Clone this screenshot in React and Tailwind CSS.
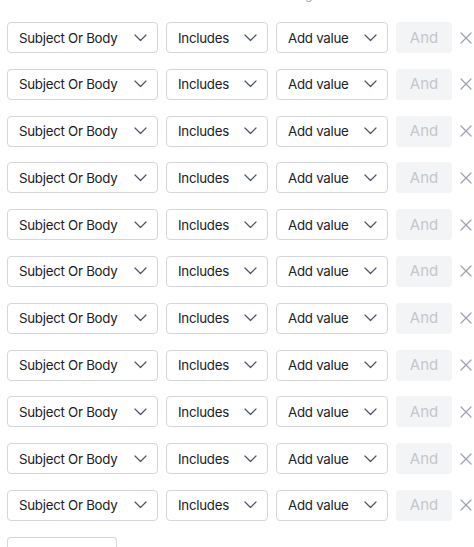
import React from 'react';

const Chevron = () => (
    <svg width="13" height="8" viewBox="0 0 13 8" fill="none" className="shrink-0">
        <path d="M1 1l5.5 5.5L12 1" stroke="#4b5563" strokeWidth="1.2" strokeLinecap="round" strokeLinejoin="round" />
    </svg>
);

const Close = () => (
    <svg width="12" height="12" viewBox="0 0 12 12" fill="none">
        <path d="M1 1l10 10M11 1L1 11" stroke="#9ca3af" strokeWidth="1.3" strokeLinecap="round" />
    </svg>
);

const Select = ({ label, width }) => (
    <div className={`${width} h-[31px] shrink-0 flex items-center justify-between pl-[11px] pr-[10px] border border-[#d4d6da] rounded-[4px] bg-white`}>
        <span className="text-[13.3px] tracking-[-0.02em] text-[#202124] leading-[18px]">{label}</span>
        <Chevron />
    </div>
);

const App = () => {
    const rows = Array.from({ length: 11 });

    return (
        <div className="w-[474px] h-[547px] overflow-hidden bg-white" style={{ fontFamily: 'Inter, "Noto Sans", sans-serif' }}>
            <div className="h-[22px] relative">
                <p className="absolute left-[105px] top-[-13px] text-[12.5px] tracking-[-0.01em] leading-[16px] text-[#a3a7ad] whitespace-nowrap">
                    Find emails that match the following characteristics
                </p>
            </div>
            <div className="flex flex-col gap-[15.8px] px-[7px]">
                {rows.map((_, i) => (
                    <div key={i} className="flex items-center gap-[8px]">
                        <Select label="Subject Or Body" width="w-[151px]" />
                        <Select label="Includes" width="w-[102px]" />
                        <Select label="Add value" width="w-[112px]" />
                        <div className="w-[56px] h-[31px] shrink-0 flex items-center justify-center rounded-[4px] bg-[#f3f4f6] text-[15px] leading-[18px] text-[#c4c7cc]">
                            And
                        </div>
                        <div className="flex items-center">
                            <Close />
                        </div>
                    </div>
                ))}
                <div className="w-[110px] h-[20px] border border-[#d4d6da] border-b-0 rounded-t-[4px]" />
            </div>
        </div>
    );
};

export default App;
